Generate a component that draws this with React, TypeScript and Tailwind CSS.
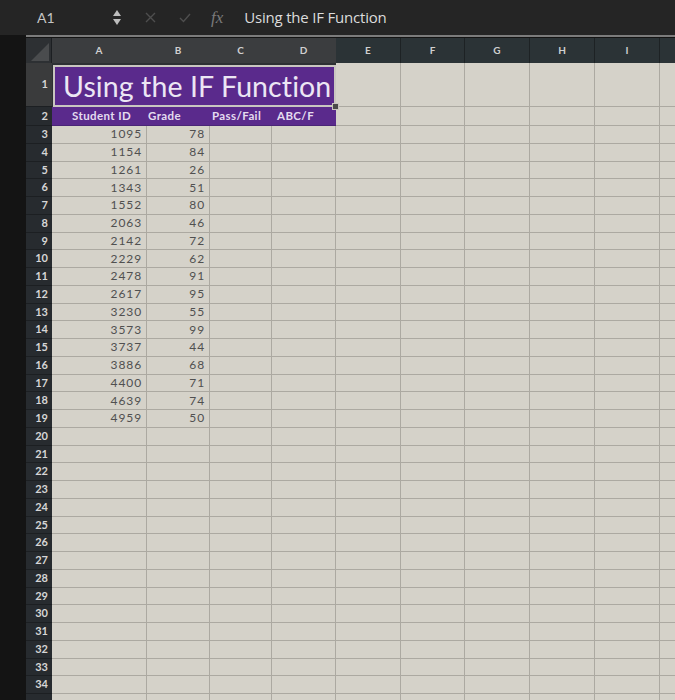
import React from "react";

const data: [number, number][] = [
  [1095, 78], [1154, 84], [1261, 26], [1343, 51], [1552, 80], [2063, 46],
  [2142, 72], [2229, 62], [2478, 91], [2617, 95], [3230, 55], [3573, 99],
  [3737, 44], [3886, 68], [4400, 71], [4639, 74], [4959, 50],
];

const colW = ["w-[95px]", "w-[63px]", "w-[62px]", "w-[64px]", "w-[65px]", "w-[64px]", "w-[65px]", "w-[65px]", "w-[65px]", "w-[40px]"];
const letters = ["A", "B", "C", "D", "E", "F", "G", "H", "I", ""];

const font = { fontFamily: "Lato, 'Noto Sans', sans-serif" };

function RowHeader({ n, light }: { n?: number; light?: boolean }) {
  return (
    <div
      className={`w-[26px] shrink-0 flex items-center justify-end pr-[4px] text-[11px] font-bold text-[#d6d6d6] border-b border-[#1c1f22] ${light ? "bg-[#3a3b3c]" : "bg-[#272b2f]"}`}
    >
      {n}
    </div>
  );
}

function Cell({ i, children, className = "" }: { i: number; children?: React.ReactNode; className?: string }) {
  return (
    <div className={`${colW[i]} shrink-0 bg-[#d5d2c9] border-r border-b border-[#aca9a1] flex items-center justify-end pr-[4px] text-[12px] tracking-[0.9px] text-[#505050] ${className}`}>
      {children}
    </div>
  );
}

export default function App() {
  const rows = [];
  for (let r = 3; r <= 35; r++) {
    const d = data[r - 3];
    rows.push(
      <div key={r} className="flex h-[17.75px]">
        <RowHeader n={r <= 34 ? r : undefined} />
        {colW.map((_, i) => (
          <Cell key={i} i={i}>
            {d && i === 0 ? d[0] : d && i === 1 ? d[1] : null}
          </Cell>
        ))}
      </div>
    );
  }

  const hdr = "shrink-0 bg-[#5a2a8c] flex items-center text-[11.5px] tracking-[0.4px] font-bold text-[#e4dcef] border-b border-[#4a2477]";

  return (
    <div className="w-[675px] h-[700px] overflow-hidden bg-[#141414]" style={font}>
      {/* Formula bar */}
      <div className="h-[35px] flex items-center bg-[#252525]">
        <div className="w-[37px] shrink-0" />
        <span className="text-[14px] text-[#c4c4c4] w-[74px] shrink-0">A1</span>
        <div className="flex flex-col items-center gap-[3px] w-[12px] shrink-0">
          <svg width="8" height="6" viewBox="0 0 8 6"><path d="M4 0 L8 6 L0 6 Z" fill="#bdbdbd" /></svg>
          <svg width="8" height="6" viewBox="0 0 8 6"><path d="M0 0 L8 0 L4 6 Z" fill="#bdbdbd" /></svg>
        </div>
        <svg className="ml-[22px] shrink-0" width="11" height="11" viewBox="0 0 11 11">
          <path d="M1 1 L10 10 M10 1 L1 10" stroke="#4e4e4e" strokeWidth="1.4" />
        </svg>
        <svg className="ml-[23px] shrink-0" width="12" height="10" viewBox="0 0 12 10">
          <path d="M1 5 L4.5 8.5 L11 1" stroke="#4e4e4e" strokeWidth="1.4" fill="none" />
        </svg>
        <span className="ml-[20px] text-[17px] italic text-[#7a7a7a] shrink-0" style={{ fontFamily: "'Liberation Serif', serif" }}>fx</span>
        <span className="ml-[21px] text-[15px] text-[#dcdcdc] shrink-0" style={{ fontFamily: "'Open Sans', sans-serif", letterSpacing: "-0.2px" }}>Using the IF Function</span>
      </div>
      <div className="ml-[26px] h-[2px] bg-[#7c7c7c]" />
      <div className="h-[1px]" />

      <div className="flex">
        <div className="w-[26px] shrink-0 bg-[#141414]" />
        <div className="flex-1">
          {/* Column headers */}
          <div className="flex h-[25px]">
            <div className="w-[26px] shrink-0 bg-[#2d3033] relative border-r border-[#1c1f22]">
              <svg className="absolute right-[2px] bottom-[2px]" width="18" height="18" viewBox="0 0 18 18">
                <path d="M18 0 L18 18 L0 18 Z" fill="#4a4c4e" />
              </svg>
            </div>
            {colW.map((w, i) => (
              <div
                key={i}
                className={`${w} shrink-0 flex items-center justify-center text-[10px] font-bold text-[#d0d0d0] border-r ${i < 4 ? "bg-[#3b3d3f] border-[#3b3d3f]" : "bg-[#2b3336] border-[#1d2224]"}`}
              >
                {letters[i]}
              </div>
            ))}
          </div>

          {/* Row 1 */}
          <div className="flex h-[44px] bg-[#d5d2c9]">
            <RowHeader n={1} light />
            <div className="w-[284px] shrink-0 pt-[2px] pl-[1px] bg-[#2d3033]">
              <div className="relative h-[42px] bg-[#5a2a8c] border-2 border-[#c9c6c0] flex items-center pl-[8px]">
                <span className="text-[28.5px] text-[#ece6f4] tracking-[0.1px] leading-none" style={{ fontFamily: "Lato, sans-serif" }}>
                  Using the IF Function
                </span>
                <div className="absolute -right-[5px] -bottom-[5px] w-[7px] h-[7px] bg-[#4a4a4a] border border-[#c9c6c0]" />
              </div>
            </div>
            {colW.slice(4).map((_, j) => (
              <Cell key={j} i={j + 4} />
            ))}
          </div>

          {/* Row 2 */}
          <div className="flex h-[19px]">
            <RowHeader n={2} />
            <div className={`w-[95px] pl-[20px] ${hdr}`}>Student ID</div>
            <div className={`w-[63px] pl-[1px] ${hdr}`}>Grade</div>
            <div className={`w-[62px] pl-[2px] ${hdr}`}>Pass/Fail</div>
            <div className={`w-[64px] pl-[5px] ${hdr}`}>ABC/F</div>
            {colW.slice(4).map((_, j) => (
              <Cell key={j} i={j + 4} />
            ))}
          </div>

          <div>{rows}</div>
        </div>
      </div>
    </div>
  );
}
